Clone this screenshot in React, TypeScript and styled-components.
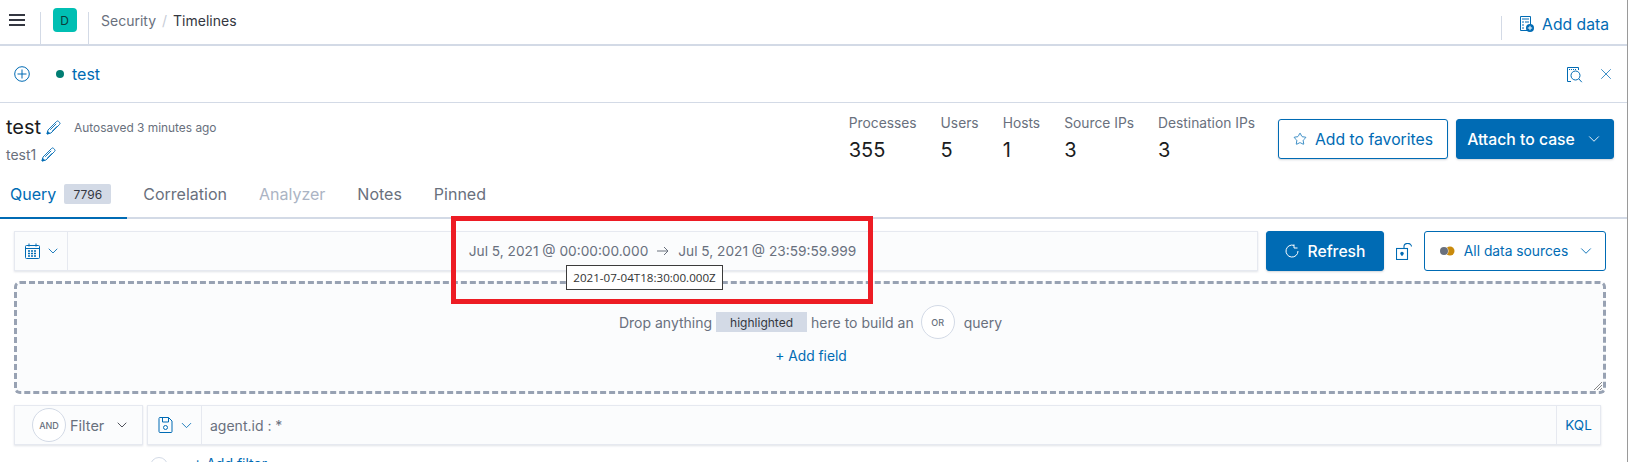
import React from "react";
import styled, { createGlobalStyle } from "styled-components";
import { ChevronDown, Star, X } from "lucide-react";

const blue = "#006bb4";
const ink = "#343741";
const subdued = "#69707d";
const line = "#d3dae6";

const GlobalStyle = createGlobalStyle`
  html, body {
    margin: 0;
    background: #fff;
  }
  * {
    box-sizing: border-box;
  }
`;

const Page = styled.div`
  position: relative;
  width: 1628px;
  height: 462px;
  overflow: hidden;
  border-right: 1px solid #9a9a9a;
  font-family: Inter, "Liberation Sans", sans-serif;
  color: ${ink};
  font-size: 14px;
`;

const TopBar = styled.header`
  display: flex;
  align-items: flex-start;
  height: 46px;
  border-bottom: 2px solid ${line};
`;

const MenuSlot = styled.div`
  display: flex;
  justify-content: flex-start;
  width: 40px;
  padding: 14px 0 0 9px;
`;

const HeaderDivider = styled.span`
  flex: none;
  align-self: flex-end;
  width: 1px;
  height: 32px;
  background: ${line};
`;

const SpaceSlot = styled.div`
  display: flex;
  justify-content: center;
  width: 47px;
  padding-top: 8px;
`;

const SpaceAvatar = styled.div`
  display: flex;
  align-items: center;
  justify-content: center;
  width: 24px;
  height: 24px;
  border-radius: 4px;
  background: #00bfb3;
  color: #0b3b3a;
  font-size: 12px;
`;

const Crumbs = styled.nav`
  display: flex;
  align-items: center;
  gap: 6px;
  height: 40px;
  padding-left: 12px;
  flex: 1;
`;

const Crumb = styled.span<{ $current?: boolean }>`
  color: ${(p) => (p.$current ? ink : subdued)};
  font-size: 14px;
`;

const CrumbSlash = styled.span`
  color: #c6ccd6;
  font-size: 14px;
`;

const AddData = styled.div`
  display: flex;
  align-items: center;
  gap: 8px;
  height: 24px;
  margin-top: 16px;
  padding: 0 18px 8px 17px;
  border-left: 1px solid ${line};
  color: ${blue};
  font-size: 15.7px;
`;

const TimelineBar = styled.div`
  display: flex;
  align-items: center;
  height: 57px;
  padding: 0 12px 0 14px;
  border-bottom: 1px solid ${line};
`;

const StatusDot = styled.span`
  width: 8px;
  height: 8px;
  margin-left: 26px;
  border-radius: 50%;
  background: #017d73;
`;

const TimelineName = styled.span`
  margin-left: 8px;
  flex: 1;
  color: ${blue};
  font-size: 16px;
`;

const BarIcons = styled.div`
  display: flex;
  align-items: center;
  gap: 14px;
  color: ${blue};
`;

const Summary = styled.section`
  display: flex;
  justify-content: space-between;
  height: 76px;
  padding: 0 13px 0 6px;
`;

const TitleBlock = styled.div`
  padding-top: 11px;
`;

const TitleRow = styled.div`
  display: flex;
  align-items: center;
  height: 26px;
`;

const TitleText = styled.span`
  font-size: 20px;
  color: #1a1c21;
`;

const PencilGap = styled.span`
  display: flex;
  margin-left: 5px;
`;

const Autosaved = styled.span`
  margin-left: 13px;
  font-size: 11.9px;
  color: ${subdued};
`;

const DescriptionRow = styled.div`
  display: flex;
  align-items: center;
  height: 22px;
  margin-top: 3px;
  font-size: 14px;
  color: ${subdued};
`;

const SummaryRight = styled.div`
  display: flex;
  align-items: flex-start;
`;

const Stats = styled.div`
  display: flex;
  gap: 24px;
  padding-top: 12px;
  margin-right: 23px;
`;

const Stat = styled.div`
  display: flex;
  flex-direction: column;
`;

const StatLabel = styled.span`
  font-size: 13.8px;
  line-height: 16px;
  color: ${subdued};
`;

const StatValue = styled.span`
  margin-top: 7px;
  font-size: 20px;
  line-height: 24px;
  color: #1a1c21;
`;

const Button = styled.button<{ $solid?: boolean; $width: number }>`
  display: flex;
  align-items: center;
  justify-content: center;
  width: ${(p) => p.$width}px;
  height: 40px;
  padding: 0;
  border: 1px solid ${blue};
  border-radius: 3px;
  background: ${(p) => (p.$solid ? blue : "#fff")};
  color: ${(p) => (p.$solid ? "#fff" : blue)};
  font-family: inherit;
  font-size: 14px;
  font-weight: ${(p) => (p.$solid ? 500 : 400)};
  box-shadow: 0 1px 2px rgba(105, 112, 125, 0.3);
`;

const ActionButtons = styled.div`
  display: flex;
  gap: 8px;
  margin-top: 16px;
`;

const CaseButton = styled(Button)`
  gap: 10px;
  font-size: 15.75px;
`;

const FavButton = styled(Button)`
  gap: 8px;
  font-size: 15.75px;
`;

const Tabs = styled.div`
  display: flex;
  align-items: flex-start;
  height: 40px;
  border-bottom: 2px solid ${line};
`;

const Tab = styled.div<{ $active?: boolean; $disabled?: boolean }>`
  display: flex;
  align-items: center;
  gap: 8px;
  height: 40px;
  padding: 0 16px 8px ${(p) => (p.$active ? "10px" : "16px")};
  border-bottom: 2px solid ${(p) => (p.$active ? blue : "transparent")};
  color: ${(p) => (p.$active ? blue : p.$disabled ? "#abb4c4" : subdued)};
  font-size: 16px;
`;

const TabBadge = styled.span`
  display: flex;
  align-items: center;
  justify-content: center;
  width: 47px;
  height: 20px;
  border-radius: 2px;
  background: ${line};
  color: ${ink};
  font-size: 12px;
`;

const DateRow = styled.div`
  display: flex;
  margin-top: 12px;
  padding: 0 21px 0 14px;
  height: 40px;
`;

const FieldShell = styled.div`
  display: flex;
  align-items: center;
  height: 40px;
  background: #fbfcfd;
  border: 1px solid #e6e9f0;
  box-shadow: 0 1px 2px rgba(152, 162, 179, 0.3);
`;

const DatePicker = styled(FieldShell)`
  flex: 1;
`;

const Prepend = styled.div<{ $width: number }>`
  display: flex;
  align-items: center;
  gap: 5px;
  width: ${(p) => p.$width}px;
  height: 100%;
  padding-left: 10px;
  border-right: 1px solid #e6e9f0;
  color: ${blue};
`;

const DateRange = styled.div`
  display: flex;
  flex: 1;
  align-items: center;
  justify-content: center;
  gap: 9px;
  color: ${subdued};
  font-size: 13.7px;
`;

const RefreshButton = styled(Button)`
  margin-left: 8px;
  gap: 9px;
  font-size: 15.7px;
`;

const LockSlot = styled.div`
  display: flex;
  align-items: center;
  justify-content: center;
  width: 40px;
  color: ${blue};
`;

const SourcesButton = styled(Button)`
  gap: 9px;
  padding-left: 4px;
  font-size: 13.8px;
  font-weight: 400;
  box-shadow: none;
`;

const DropZone = styled.div`
  position: relative;
  display: flex;
  flex-direction: column;
  align-items: center;
  height: 113px;
  margin: 10px 21px 0 14px;
  padding-top: 21px;
  border: 3px dashed #98a2b3;
  border-radius: 6px;
  background: #fbfcfd;
  color: ${subdued};
  font-size: 14px;
`;

const DropLine = styled.div`
  display: flex;
  align-items: center;
  height: 34px;
  margin-left: 1px;
`;

const Highlight = styled.span`
  display: flex;
  align-items: center;
  justify-content: center;
  width: 91px;
  height: 20px;
  margin: 0 4px 0 4px;
  background: ${line};
  color: ${ink};
  font-size: 12px;
`;

const OperatorCircle = styled.span<{ $size: number; $gap?: number }>`
  display: flex;
  flex: none;
  align-items: center;
  justify-content: center;
  width: ${(p) => p.$size}px;
  height: ${(p) => p.$size}px;
  margin-left: ${(p) => p.$gap ?? 0}px;
  border: 1px solid ${line};
  border-radius: 50%;
  background: #fff;
  color: ${subdued};
  font-size: 9px;
  font-weight: 500;
`;

const QueryWord = styled.span`
  margin-left: 9px;
`;

const AddField = styled.span`
  margin-top: 5px;
  margin-left: 2px;
  color: ${blue};
  font-size: 13.8px;
  line-height: 24px;
`;

const ResizeGrip = styled.svg`
  position: absolute;
  right: 0;
  bottom: 0;
`;

const FilterRow = styled.div`
  display: flex;
  gap: 4px;
  margin: 11px 26px 0 14px;
`;

const FilterGroup = styled(FieldShell)`
  width: 129px;
  padding-left: 17px;
  color: ${subdued};
  font-size: 14.5px;
`;

const FilterLabel = styled.span`
  margin-left: 4px;
  margin-right: 10px;
`;

const QueryField = styled(FieldShell)`
  flex: 1;
`;

const QueryText = styled.span`
  flex: 1;
  padding-left: 8px;
  color: ${subdued};
  font-size: 14px;
`;

const LanguageTag = styled.span`
  display: flex;
  align-items: center;
  justify-content: center;
  width: 44px;
  height: 100%;
  border-left: 1px solid #e6e9f0;
  color: ${blue};
  font-size: 13.5px;
`;

const AddFilterRow = styled.div`
  display: flex;
  align-items: flex-start;
  gap: 25px;
  margin: 12px 0 0 150px;
  color: ${blue};
  font-size: 14px;
  line-height: 14px;
`;

const Annotation = styled.div`
  position: absolute;
  left: 451px;
  top: 216px;
  width: 422px;
  height: 88px;
  border: 5px solid #ed1c24;
`;

const DateTooltip = styled.div`
  position: absolute;
  left: 566px;
  top: 265px;
  display: flex;
  align-items: center;
  justify-content: center;
  width: 157px;
  height: 25px;
  border: 1px solid #3c3c3c;
  background: #fff;
  color: #333;
  font-family: "Open Sans", "Liberation Sans", sans-serif;
  font-size: 11.6px;
`;

const MenuIcon = () => (
  <svg width="16" height="12" viewBox="0 0 16 12" fill="none" stroke={ink} strokeWidth="2">
    <path d="M0 1h16M0 6h16M0 11h16" />
  </svg>
);

const PlusCircle = () => (
  <svg width="16" height="16" viewBox="0 0 16 16" fill="none" stroke={blue} strokeWidth="1">
    <circle cx="8" cy="8" r="7.3" />
    <path d="M8 3.5v9M3.5 8h9" />
  </svg>
);

const Pencil = () => (
  <svg width="15" height="15" viewBox="0 0 15 15" fill="none" stroke={blue} strokeWidth="0.9">
    <path d="M1 14l1-4 8.5-8.5a1.5 1.5 0 0 1 2.2 0l.8.8a1.5 1.5 0 0 1 0 2.2L5 13z" />
    <path d="M4.2 9.8l6-6M6.2 11.2l5-5" />
    <path d="M1 14l.7-2.6 1.9 1.9z" fill={blue} />
  </svg>
);

const AddDataIcon = () => (
  <svg width="15" height="16" viewBox="0 0 15 16" fill="none">
    <path d="M1.5 .5h10v14h-10z" stroke={blue} />
    <path d="M3 3h7M3 6h2M6 6h4M3 9h2M3 12h2" stroke={blue} />
    <circle cx="11" cy="12" r="4" fill={blue} />
    <path d="M11 9.8v4.4M8.8 12h4.4" stroke="#fff" />
  </svg>
);

const InspectIcon = () => (
  <svg width="17" height="17" viewBox="0 0 17 17" fill="none" stroke={blue} strokeWidth="1">
    <path d="M5 15.5H1.5v-14h11V4" />
    <path d="M3 3.5h8" strokeDasharray="1 1" />
    <circle cx="9.5" cy="9.5" r="4.5" />
    <path d="M12.8 12.8l3 3.4" />
  </svg>
);

const CalendarIcon = () => (
  <svg width="15" height="16" viewBox="0 0 15 16" fill="none" stroke={blue} strokeWidth="1">
    <rect x=".5" y="2.5" width="14" height="13" rx="1" />
    <path d="M.5 5.5h14M4 .5v3M11 .5v3" />
    <path d="M3 8h9M3 10.5h9M3 13h9" strokeWidth="1.4" strokeDasharray="2 1" />
  </svg>
);

const ArrowRight = () => (
  <svg width="12" height="10" viewBox="0 0 12 10" fill="none" stroke={subdued} strokeWidth="1">
    <path d="M0 5h11M7 1l4 4-4 4" />
  </svg>
);

const RefreshIcon = () => (
  <svg width="14" height="14" viewBox="0 0 14 14" fill="none" stroke="#fff" strokeWidth="1">
    <path d="M9 1.4a6 6 0 1 0 4 5.6" />
    <path d="M9 .5v3.5h3.5" />
  </svg>
);

const LockOpen = () => (
  <svg width="17" height="17" viewBox="0 0 17 17" fill="none" stroke={blue} strokeWidth="1.1">
    <rect x=".5" y="5.5" width="11" height="11" />
    <path d="M8 5.5V3.6a3.6 3.1 0 0 1 7.5 0" />
    <circle cx="6" cy="10.5" r="1.2" fill={blue} />
    <path d="M6 11v2" />
  </svg>
);

const SourceDots = () => (
  <svg width="16" height="10" viewBox="0 0 16 10">
    <circle cx="11" cy="5" r="4.5" fill="#c98a0c" />
    <circle cx="5" cy="5" r="4.5" fill="#fff" />
    <circle cx="5" cy="5" r="4" fill={subdued} />
  </svg>
);

const SaveIcon = () => (
  <svg width="15" height="16" viewBox="0 0 15 16" fill="none" stroke={blue} strokeWidth="1">
    <path d="M1.5 .5h9l3.5 3.5v10.5a1 1 0 0 1-1 1h-11a1 1 0 0 1-1-1v-13a1 1 0 0 1 .5-1z" />
    <path d="M4.5 .5v4.5h6V.5" />
    <circle cx="7.5" cy="10.5" r="2" />
  </svg>
);

const stats = [
  { label: "Processes", value: "355" },
  { label: "Users", value: "5" },
  { label: "Hosts", value: "1" },
  { label: "Source IPs", value: "3" },
  { label: "Destination IPs", value: "3" },
];

const App: React.FunctionComponent = () => (
  <Page>
    <GlobalStyle />
    <TopBar>
      <MenuSlot>
        <MenuIcon />
      </MenuSlot>
      <HeaderDivider />
      <SpaceSlot>
        <SpaceAvatar>D</SpaceAvatar>
      </SpaceSlot>
      <HeaderDivider />
      <Crumbs>
        <Crumb>Security</Crumb>
        <CrumbSlash>/</CrumbSlash>
        <Crumb $current>Timelines</Crumb>
      </Crumbs>
      <AddData>
        <AddDataIcon />
        Add data
      </AddData>
    </TopBar>

    <TimelineBar>
      <PlusCircle />
      <StatusDot />
      <TimelineName>test</TimelineName>
      <BarIcons>
        <InspectIcon />
        <X size={18} strokeWidth={1} />
      </BarIcons>
    </TimelineBar>

    <Summary>
      <TitleBlock>
        <TitleRow>
          <TitleText>test</TitleText>
          <PencilGap>
            <Pencil />
          </PencilGap>
          <Autosaved>Autosaved 3 minutes ago</Autosaved>
        </TitleRow>
        <DescriptionRow>
          test1
          <PencilGap>
            <Pencil />
          </PencilGap>
        </DescriptionRow>
      </TitleBlock>
      <SummaryRight>
        <Stats>
          {stats.map((s) => (
            <Stat key={s.label}>
              <StatLabel>{s.label}</StatLabel>
              <StatValue>{s.value}</StatValue>
            </Stat>
          ))}
        </Stats>
        <ActionButtons>
          <FavButton $width={170}>
            <Star size={14} strokeWidth={1.3} />
            Add to favorites
          </FavButton>
          <CaseButton $solid $width={158}>
            Attach to case
            <ChevronDown size={18} strokeWidth={1.2} />
          </CaseButton>
        </ActionButtons>
      </SummaryRight>
    </Summary>

    <Tabs>
      <Tab $active>
        Query
        <TabBadge>7796</TabBadge>
      </Tab>
      <Tab>Correlation</Tab>
      <Tab $disabled>Analyzer</Tab>
      <Tab>Notes</Tab>
      <Tab>Pinned</Tab>
    </Tabs>

    <DateRow>
      <DatePicker>
        <Prepend $width={53}>
          <CalendarIcon />
          <ChevronDown size={16} strokeWidth={1.3} />
        </Prepend>
        <DateRange>
          <span>Jul 5, 2021 @ 00:00:00.000</span>
          <ArrowRight />
          <span>Jul 5, 2021 @ 23:59:59.999</span>
        </DateRange>
      </DatePicker>
      <RefreshButton $solid $width={118}>
        <RefreshIcon />
        Refresh
      </RefreshButton>
      <LockSlot>
        <LockOpen />
      </LockSlot>
      <SourcesButton $width={182}>
        <SourceDots />
        All data sources
        <ChevronDown size={18} strokeWidth={1.2} />
      </SourcesButton>
    </DateRow>

    <DropZone>
      <DropLine>
        Drop anything
        <Highlight>highlighted</Highlight>
        here to build an
        <OperatorCircle $size={34} $gap={7}>
          OR
        </OperatorCircle>
        <QueryWord>query</QueryWord>
      </DropLine>
      <AddField>+ Add field</AddField>
      <ResizeGrip width="10" height="10" viewBox="0 0 10 10" stroke="#555" strokeWidth="0.7">
        <path d="M1 9l8-8M4 9l5-5M7 9l2-2" />
      </ResizeGrip>
    </DropZone>

    <FilterRow>
      <FilterGroup>
        <OperatorCircle $size={34}>AND</OperatorCircle>
        <FilterLabel>Filter</FilterLabel>
        <ChevronDown size={16} strokeWidth={1.3} color={ink} />
      </FilterGroup>
      <QueryField>
        <Prepend $width={54}>
          <SaveIcon />
          <ChevronDown size={17} strokeWidth={1.2} />
        </Prepend>
        <QueryText>agent.id : *</QueryText>
        <LanguageTag>KQL</LanguageTag>
      </QueryField>
    </FilterRow>

    <AddFilterRow>
      <OperatorCircle $size={18} />
      + Add filter
    </AddFilterRow>

    <Annotation />
    <DateTooltip>2021-07-04T18:30:00.000Z</DateTooltip>
  </Page>
);

export default App;
